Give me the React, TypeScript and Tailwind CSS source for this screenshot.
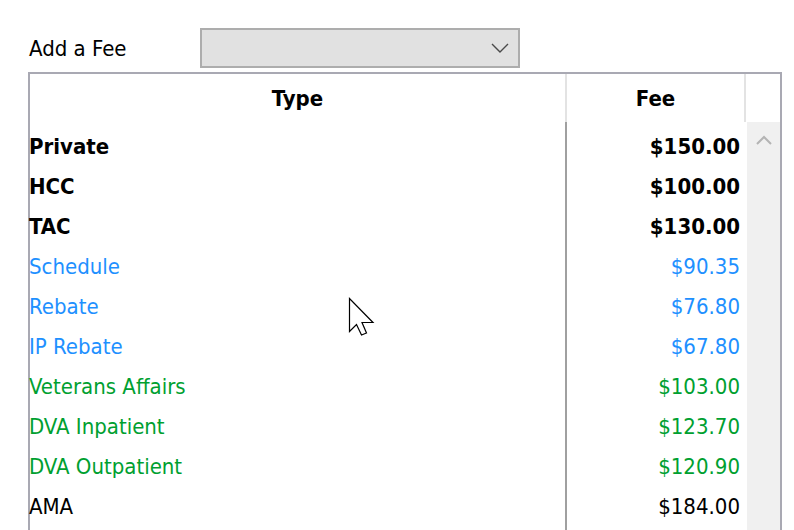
import React from "react";

type Fee = { type: string; amount: string; tone: "bold" | "blue" | "green" | "plain" };

const fees: Fee[] = [
  { type: "Private", amount: "$150.00", tone: "bold" },
  { type: "HCC", amount: "$100.00", tone: "bold" },
  { type: "TAC", amount: "$130.00", tone: "bold" },
  { type: "Schedule", amount: "$90.35", tone: "blue" },
  { type: "Rebate", amount: "$76.80", tone: "blue" },
  { type: "IP Rebate", amount: "$67.80", tone: "blue" },
  { type: "Veterans Affairs", amount: "$103.00", tone: "green" },
  { type: "DVA Inpatient", amount: "$123.70", tone: "green" },
  { type: "DVA Outpatient", amount: "$120.90", tone: "green" },
  { type: "AMA", amount: "$184.00", tone: "plain" },
];

const toneClass = {
  bold: "font-bold text-black",
  blue: "text-[#1e90ff]",
  green: "text-[#00a030]",
  plain: "text-black",
};

const App: React.FC = () => {
  return (
    <div className="relative w-[794px] h-[530px] overflow-hidden bg-white font-['DejaVu_Sans',sans-serif] font-stretch-condensed text-[22px] text-black">
      {/* Add a Fee */}
      <div className="flex items-center pt-[28px] pl-[29px]">
        <span className="w-[171px] pt-[2px] leading-none">Add a Fee</span>
        <div className="flex items-center justify-end w-[320px] h-[40px] border-2 border-[#adadad] bg-[#e1e1e1] pr-[9px]">
          <svg width="18" height="10" viewBox="0 0 18 10" fill="none">
            <path d="M1 1l8 8 8-8" stroke="#4a4a4a" strokeWidth="1.4" />
          </svg>
        </div>
      </div>

      {/* Table */}
      <div className="ml-[28px] mt-[4px] w-[754px] h-[470px] border-2 border-b-0 border-[#a9a9b3]">
        {/* Header */}
        <div className="flex h-[48px] font-bold">
          <div className="flex items-center justify-center w-[535px] pt-[1px]">Type</div>
          <div className="w-[2px] bg-[#e3e3e3]" />
          <div className="flex items-center justify-center w-[177px] pt-[1px]">Fee</div>
          <div className="w-[2px] bg-[#e3e3e3]" />
          <div className="flex-1" />
        </div>

        {/* Body */}
        <div className="flex h-full">
          <div className="w-[535px] pt-[4px]">
            {fees.map((f) => (
              <div key={f.type} className={`flex items-center h-[40px] -ml-[1px] ${toneClass[f.tone]}`}>
                {f.type}
              </div>
            ))}
          </div>
          <div className="w-[2px] bg-[#a0a0a0]" />
          <div className="w-[180px] pt-[4px]">
            {fees.map((f) => (
              <div key={f.type} className={`flex items-center justify-end h-[40px] pr-[7px] ${toneClass[f.tone]}`}>
                {f.amount}
              </div>
            ))}
          </div>
          <div className="flex-1 flex justify-center pt-[13px] bg-[#f0f0f0]">
            <svg width="16" height="10" viewBox="0 0 16 10" fill="none">
              <path d="M1 9l7-7 7 7" stroke="#b4b4b4" strokeWidth="2" />
            </svg>
          </div>
        </div>
      </div>

      {/* Mouse cursor */}
      <svg className="absolute left-[348px] top-[297px]" width="28" height="40" viewBox="0 0 28 40" fill="none">
        <path
          d="M1.5 1.5V34.5L8.5 27.5L13.5 38L18.5 36L14 25.5H25Z"
          fill="#ffffff"
          stroke="#000000"
          strokeWidth="1.2"
          strokeLinejoin="miter"
        />
      </svg>
    </div>
  );
};

export default App;
